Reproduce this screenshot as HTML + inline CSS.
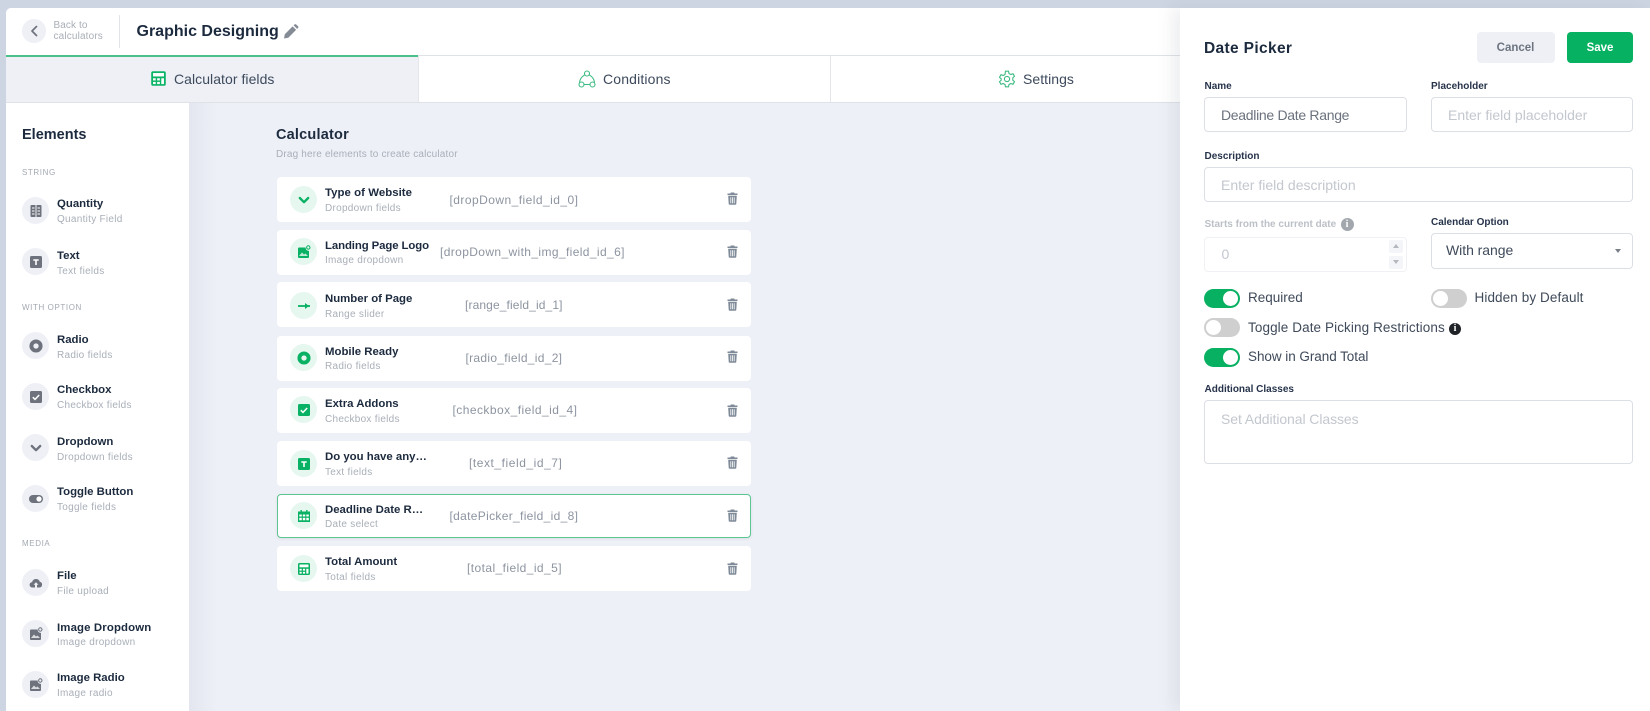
<!DOCTYPE html>
<html lang="en">
<head>
<meta charset="utf-8">
<title>Graphic Designing</title>
<style>
html,body{margin:0;padding:0;width:1650px;height:711px;overflow:hidden;background:#cdd4e2;font-family:"Liberation Sans",sans-serif}
#page{position:absolute;left:0;top:0;width:1650px;height:711px;overflow:hidden;filter:blur(.35px)}
.a,.t{position:absolute}
.t{white-space:nowrap;line-height:20px;height:20px}
.ti{font-size:11.4px;font-weight:bold;color:#1c2a3e;margin-top:1px}
.su{font-size:10px;color:#a9afb8;letter-spacing:.28px;margin-top:1.5px}
.id{font-size:12px;color:#8d94a0;letter-spacing:.45px}
.sec{font-size:8px;color:#a3a9b2;letter-spacing:.6px;left:22px;margin-top:1px}
.lb{font-size:10px;font-weight:bold;color:#26334a;margin-top:1px}
.tb{font-size:14px;color:#3d4a5c}
.tg{font-size:13.5px;color:#3f4a5a}
.c{position:absolute;border-radius:50%;display:flex;align-items:center;justify-content:center}
.cg{width:27px;height:27px;background:#eef0f6;color:#6d727c;left:22px}
.cw{width:27px;height:27px;background:#e6f7ef;color:#08b163;left:290px}
.row{position:absolute;left:277px;width:474px;height:45px;background:#fff;border-radius:4px}
.in{position:absolute;box-sizing:border-box;background:#fff;border:1px solid #dcdfe5;border-radius:4px}
.pl{font-size:14px;color:#c3c7ce}
.sw{position:absolute;width:36px;height:19px;border-radius:10px}
.sw i{position:absolute;top:2px;width:15px;height:15px;border-radius:50%;background:#fff}
.on{background:#08b162}.on i{right:2px}
.off{background:#cfcfcf}.off i{left:2px}
svg{display:block}
</style>
</head>
<body>
<svg width="0" height="0" style="position:absolute">
<defs>
<symbol id="chev" viewBox="0 0 14 14"><path d="M2.800 5l4.200 4.200L11.200 5" fill="none" stroke="currentColor" stroke-width="2.300" stroke-linecap="round" stroke-linejoin="round"/></symbol>
<symbol id="img" viewBox="0 0 14 14"><path d="M1.500 2.500h7.200a3 3 0 0 0 3.300 3.400V12a1 1 0 0 1-1 1h-9a1 1 0 0 1-1-1V3.500a1 1 0 0 1 1-1z" fill="currentColor"/><path d="M2 11l3-3.500 2 2 1.500-1 2.500 2.500z" fill="#fff" opacity=".75"/><circle cx="11.300" cy="2.500" r="1.700" fill="none" stroke="currentColor" stroke-width="1"/></symbol>
<symbol id="arrow" viewBox="0 0 14 14"><path d="M1 7h12" stroke="currentColor" stroke-width="1.800"/><path d="M8 4l4 3-4 3z" fill="currentColor"/></symbol>
<symbol id="radio" viewBox="0 0 14 14"><circle cx="7" cy="7" r="4.600" fill="none" stroke="currentColor" stroke-width="3.900"/></symbol>
<symbol id="check" viewBox="0 0 14 14"><rect x="1" y="1" width="12" height="12" rx="1.500" fill="currentColor"/><path d="M3.800 7.200l2.200 2.200 4.200-4.400" fill="none" stroke="#fff" stroke-width="1.500"/></symbol>
<symbol id="text" viewBox="0 0 14 14"><rect x="1" y="1" width="12" height="12" rx="1.500" fill="currentColor"/><path d="M4.300 4.300h5.400v1.500H7.800v4.200H6.200V5.800H4.300z" fill="#fff"/></symbol>
<symbol id="cal" viewBox="0 0 14 14"><path d="M3.500 1h1.400v1.500h4.200V1h1.400v1.500H13V13H1V2.500h2.500z" fill="currentColor"/><g fill="#fff"><rect x="2.300" y="5.500" width="2.500" height="2"/><rect x="5.800" y="5.500" width="2.500" height="2"/><rect x="9.300" y="5.500" width="2.500" height="2"/><rect x="2.300" y="8.800" width="2.500" height="2.500"/><rect x="5.800" y="8.800" width="2.500" height="2.500"/><rect x="9.300" y="8.800" width="2.500" height="2.500"/></g></symbol>
<symbol id="calc" viewBox="0 0 14 14"><rect x="1" y="1" width="12" height="12" rx="1.500" fill="currentColor"/><g fill="#fff"><rect x="2.500" y="2.500" width="9" height="2.800"/><rect x="2.500" y="6.800" width="2.200" height="1.800"/><rect x="5.900" y="6.800" width="2.200" height="1.800"/><rect x="9.300" y="6.800" width="2.200" height="4.800"/><rect x="2.500" y="9.800" width="2.200" height="1.800"/><rect x="5.900" y="9.800" width="2.200" height="1.800"/></g></symbol>
<symbol id="qty" viewBox="0 0 14 14"><rect x="1.500" y="1" width="11" height="12" rx="1" fill="currentColor"/><g fill="none" stroke="#fff" stroke-width=".9"><path d="M7 1v12M3 4h2.500M3 7h2.500M3 10h2.500M8.500 4H11M8.500 7H11M8.500 10H11"/></g></symbol>
<symbol id="tog" viewBox="0 0 14 14"><rect x="0" y="3" width="14" height="8" rx="4" fill="currentColor"/><circle cx="10" cy="7" r="2.600" fill="#fff"/></symbol>
<symbol id="cloud" viewBox="0 0 14 14"><path d="M3.500 11.500a2.700 2.700 0 0 1-.4-5.400 4 4 0 0 1 7.700-.3 2.900 2.900 0 0 1-.2 5.700H8V8.800h1.500L7 6.200 4.500 8.800H6v2.700z" fill="currentColor"/></symbol>
<symbol id="trash" viewBox="0 0 11 13"><path d="M3.800.5h3.400l.5 1H10.500v1.500H.5V1.500h2.800zM1.200 3.800h8.600l-.5 8a1 1 0 0 1-1 1H2.700a1 1 0 0 1-1-1z" fill="#7f8a98"/><path d="M3.800 5.300v6M5.500 5.300v6M7.200 5.300v6" stroke="#fff" stroke-width=".8"/></symbol>
</defs>
</svg>
<div id="page">
<!-- card -->
<div class="a" style="left:6px;top:8px;width:1400px;height:703px;background:#eef0f7;border-radius:5px 0 0 0;overflow:hidden"></div>
<!-- header -->
<div class="a" style="left:6px;top:8px;width:1180px;height:47px;background:#fff;border-radius:5px 0 0 0"></div>
<div class="a c" style="left:22px;top:19px;width:24px;height:24px;background:#eef0f6"><svg width="8" height="14" viewBox="0 0 8 14"><path d="M6.500 2.500L2 7l4.500 4.500" fill="none" stroke="#6d727c" stroke-width="1.700" stroke-linecap="round" stroke-linejoin="round"/></svg></div>
<div class="t" style="left:53.500px;top:16px;font-size:10px;letter-spacing:.1px;color:#a9aeb7">Back to</div>
<div class="t" style="left:53.500px;top:27px;font-size:10px;letter-spacing:.15px;color:#a9aeb7">calculators</div>
<div class="a" style="left:119px;top:15px;width:1px;height:33px;background:#e2e4e9"></div>
<div class="t" style="left:136.500px;top:22px;font-size:16px;font-weight:bold;color:#1c2a3e">Graphic Designing</div>
<svg class="a" style="left:283px;top:24px" width="16" height="15" viewBox="0 0 16 15"><path d="M1 14.500l.8-4.300 7.800-7.800 3.500 3.500-7.800 7.800zM10.600 1.400l.9-.9a1.200 1.200 0 0 1 1.700 0l1.800 1.800a1.200 1.200 0 0 1 0 1.700l-.9.900z" fill="#858b95"/></svg>
<!-- tabs -->
<div class="a" style="left:6px;top:55px;width:1180px;height:48px;background:#fff"></div>
<div class="a" style="left:6px;top:56px;width:412px;height:46px;background:#eef0f6"></div>
<div class="a" style="left:6px;top:55px;width:1180px;height:1px;background:#dfe2e6"></div>
<div class="a" style="left:6px;top:55px;width:412px;height:1.500px;background:#4cc08a"></div>
<div class="a" style="left:6px;top:102px;width:1180px;height:1px;background:#dfe2e6"></div>
<div class="a" style="left:417.500px;top:56px;width:1px;height:46px;background:#e4e6ea"></div>
<div class="a" style="left:830px;top:56px;width:1px;height:46px;background:#e4e6ea"></div>
<svg class="a" style="left:150px;top:70px;color:#0cb466" width="17" height="17"><use href="#calc"/></svg>
<div class="t tb" style="left:174px;top:69px;letter-spacing:.05px">Calculator fields</div>
<svg class="a" style="left:578px;top:70px" width="18" height="18" viewBox="0 0 18 18" fill="none" stroke="#3dbb82" stroke-width="1.100"><circle cx="9" cy="3.500" r="2.500"/><circle cx="3.500" cy="14.500" r="2.500"/><circle cx="14.500" cy="14.500" r="2.500"/><path d="M6.800 4.800C4 6.500 1.800 9 1.500 12.500M11.200 4.800c2.800 1.700 5 4.200 5.300 7.700M6 14.500h6"/></svg>
<div class="t tb" style="left:603px;top:69px;letter-spacing:.15px">Conditions</div>
<svg class="a" style="left:998px;top:70px" width="18" height="18" viewBox="0 0 18 18" fill="none" stroke="#3dbb82" stroke-width="1.100"><circle cx="9" cy="9" r="2.600"/><path d="M7.500 1.200h3l.5 2.300 1.800 1 2.200-.8 1.500 2.600-1.700 1.600v2.200l1.700 1.600-1.500 2.600-2.200-.8-1.800 1-.5 2.300h-3l-.5-2.300-1.800-1-2.200.8-1.500-2.600 1.700-1.600V8.900L1.500 7.300 3 4.700l2.200.8 1.800-1z"/></svg>
<div class="t tb" style="left:1023px;top:69px;letter-spacing:.05px">Settings</div>
<!-- sidebar -->
<div class="a" style="left:189px;top:103px;width:28px;height:608px;background:linear-gradient(90deg,#e3e6ef,#eef0f7)"></div>
<div class="a" style="left:6px;top:103px;width:183px;height:608px;background:#fff"></div>
<div class="t" style="left:22px;top:124.500px;font-size:14.500px;font-weight:bold;color:#1c2a3e">Elements</div>
<div class="t sec" style="top:162px">STRING</div>
<div class="t sec" style="top:297px">WITH OPTION</div>
<div class="t sec" style="top:533px">MEDIA</div>

<div class="c cg" style="top:197px"><svg width="14" height="14"><use href="#qty"/></svg></div>
<div class="t ti" style="left:57px;top:193px">Quantity</div><div class="t su" style="left:57px;top:208px">Quantity Field</div>
<div class="c cg" style="top:248px"><svg width="14" height="14"><use href="#text"/></svg></div>
<div class="t ti" style="left:57px;top:244.500px">Text</div><div class="t su" style="left:57px;top:260px">Text fields</div>
<div class="c cg" style="top:332px"><svg width="14" height="14"><use href="#radio"/></svg></div>
<div class="t ti" style="left:57px;top:329px">Radio</div><div class="t su" style="left:57px;top:344px">Radio fields</div>
<div class="c cg" style="top:383px"><svg width="14" height="14"><use href="#check"/></svg></div>
<div class="t ti" style="left:57px;top:379px">Checkbox</div><div class="t su" style="left:57px;top:394px">Checkbox fields</div>
<div class="c cg" style="top:434px"><svg width="14" height="14"><use href="#chev"/></svg></div>
<div class="t ti" style="left:57px;top:431px">Dropdown</div><div class="t su" style="left:57px;top:446px">Dropdown fields</div>
<div class="c cg" style="top:485px"><svg width="14" height="14"><use href="#tog"/></svg></div>
<div class="t ti" style="left:57px;top:481px">Toggle Button</div><div class="t su" style="left:57px;top:496px">Toggle fields</div>
<div class="c cg" style="top:569px"><svg width="14" height="14"><use href="#cloud"/></svg></div>
<div class="t ti" style="left:57px;top:565px">File</div><div class="t su" style="left:57px;top:580px">File upload</div>
<div class="c cg" style="top:620px"><svg width="14" height="14"><use href="#img"/></svg></div>
<div class="t ti" style="left:57px;top:616.500px;letter-spacing:.14px">Image Dropdown</div><div class="t su" style="left:57px;top:631px">Image dropdown</div>
<div class="c cg" style="top:671px"><svg width="14" height="14"><use href="#img"/></svg></div>
<div class="t ti" style="left:57px;top:667px">Image Radio</div><div class="t su" style="left:57px;top:682px">Image radio</div>

<!-- calculator -->
<div class="t" style="left:276px;top:124.500px;font-size:14.500px;font-weight:bold;color:#1c2a3e;letter-spacing:.2px">Calculator</div>
<div class="t su" style="left:276px;top:143px;letter-spacing:.17px">Drag here elements to create calculator</div>

<div class="row" style="top:177px"></div>
<div class="c cw" style="top:186px"><svg width="14" height="14"><use href="#chev"/></svg></div>
<div class="t ti" style="left:325px;top:182px;letter-spacing:.05px">Type of Website</div><div class="t su" style="left:325px;top:197px">Dropdown fields</div>
<div class="t id" style="left:449.500px;top:190px">[dropDown_field_id_0]</div>
<svg class="a" style="left:727px;top:192px" width="11" height="13"><use href="#trash"/></svg>

<div class="row" style="top:230px"></div>
<div class="c cw" style="top:238px"><svg width="14" height="14"><use href="#img"/></svg></div>
<div class="t ti" style="left:325px;top:235px;letter-spacing:-.1px">Landing Page Logo</div><div class="t su" style="left:325px;top:249px">Image dropdown</div>
<div class="t id" style="left:440px;top:242px;letter-spacing:.38px">[dropDown_with_img_field_id_6]</div>
<svg class="a" style="left:727px;top:245px" width="11" height="13"><use href="#trash"/></svg>

<div class="row" style="top:282px"></div>
<div class="c cw" style="top:292px"><svg width="14" height="14"><use href="#arrow"/></svg></div>
<div class="t ti" style="left:325px;top:288px">Number of Page</div><div class="t su" style="left:325px;top:303px">Range slider</div>
<div class="t id" style="left:465px;top:295px;letter-spacing:.12px">[range_field_id_1]</div>
<svg class="a" style="left:727px;top:298px" width="11" height="13"><use href="#trash"/></svg>

<div class="row" style="top:335.500px"></div>
<div class="c cw" style="top:344px"><svg width="14" height="14"><use href="#radio"/></svg></div>
<div class="t ti" style="left:325px;top:340.500px">Mobile Ready</div><div class="t su" style="left:325px;top:355px">Radio fields</div>
<div class="t id" style="left:465.500px;top:347.500px;letter-spacing:.3px">[radio_field_id_2]</div>
<svg class="a" style="left:727px;top:350px" width="11" height="13"><use href="#trash"/></svg>

<div class="row" style="top:388px"></div>
<div class="c cw" style="top:396px"><svg width="14" height="14"><use href="#check"/></svg></div>
<div class="t ti" style="left:325px;top:393px">Extra Addons</div><div class="t su" style="left:325px;top:408px">Checkbox fields</div>
<div class="t id" style="left:452.500px;top:400px">[checkbox_field_id_4]</div>
<svg class="a" style="left:727px;top:404px" width="11" height="13"><use href="#trash"/></svg>

<div class="row" style="top:440.500px"></div>
<div class="c cw" style="top:450px"><svg width="14" height="14"><use href="#text"/></svg></div>
<div class="t ti" style="left:325px;top:446px">Do you have any…</div><div class="t su" style="left:325px;top:461px">Text fields</div>
<div class="t id" style="left:469px;top:453px;letter-spacing:.55px">[text_field_id_7]</div>
<svg class="a" style="left:727px;top:456px" width="11" height="13"><use href="#trash"/></svg>

<div class="row" style="top:493.500px;height:42px;box-sizing:content-box;border:1.500px solid #5cc592;left:276.500px;width:472px;box-shadow:0 1px 3px rgba(0,0,0,.08)"></div>
<div class="c cw" style="top:502px"><svg width="14" height="14"><use href="#cal"/></svg></div>
<div class="t ti" style="left:325px;top:498.500px">Deadline Date R…</div><div class="t su" style="left:325px;top:513px">Date select</div>
<div class="t id" style="left:449.500px;top:505.500px;letter-spacing:.32px">[datePicker_field_id_8]</div>
<svg class="a" style="left:727px;top:509px" width="11" height="13"><use href="#trash"/></svg>

<div class="row" style="top:546px"></div>
<div class="c cw" style="top:555px"><svg width="14" height="14"><use href="#calc"/></svg></div>
<div class="t ti" style="left:325px;top:551px">Total Amount</div><div class="t su" style="left:325px;top:566px">Total fields</div>
<div class="t id" style="left:467px;top:558px;letter-spacing:.42px">[total_field_id_5]</div>
<svg class="a" style="left:727px;top:562px" width="11" height="13"><use href="#trash"/></svg>

<!-- panel -->
<div class="a" style="left:1180px;top:8px;width:470px;height:703px;background:#fff;box-shadow:-8px 0 14px rgba(120,130,150,.13)"></div>
<div class="t" style="left:1204px;top:38.500px;font-size:15.500px;font-weight:bold;color:#1c2a3e;letter-spacing:.35px">Date Picker</div>
<div class="a" style="left:1476.500px;top:32px;width:78px;height:31px;background:#eef0f6;border-radius:4px;text-align:center;line-height:33px;font-size:11.500px;font-weight:bold;color:#6d7480">Cancel</div>
<div class="a" style="left:1567px;top:32px;width:66px;height:31px;background:#07b162;border-radius:4px;text-align:center;line-height:33px;font-size:11.500px;font-weight:bold;color:#fff">Save</div>

<div class="t lb" style="left:1204.500px;top:76px">Name</div>
<div class="t lb" style="left:1431px;top:76px">Placeholder</div>
<div class="in" style="left:1204px;top:97px;width:203px;height:35px"></div>
<div class="in" style="left:1431px;top:97px;width:202px;height:35px"></div>
<div class="t" style="left:1221px;top:105px;font-size:14px;letter-spacing:-.3px;color:#6b727d">Deadline Date Range</div>
<div class="t pl" style="left:1448px;top:105px">Enter field placeholder</div>

<div class="t lb" style="left:1204.500px;top:145.500px">Description</div>
<div class="in" style="left:1204px;top:167px;width:429px;height:35px"></div>
<div class="t pl" style="left:1221px;top:175px">Enter field description</div>

<div class="t" style="left:1204.500px;top:214.500px;font-size:10px;font-weight:bold;color:#bcc0c7">Starts from the current date</div>
<div class="c" style="left:1340.500px;top:217.500px;width:13px;height:13px;background:#a2a7ad;color:#fff;font-size:10px;font-weight:bold;font-family:'Liberation Serif',serif">i</div>
<div class="in" style="left:1204px;top:237px;width:203px;height:35px;border-color:#f0f1f4"></div>
<div class="t" style="left:1221.500px;top:244px;font-size:14px;color:#c3c7ce">0</div>
<div class="a" style="left:1389px;top:240px;width:14px;height:13px;background:#f4f5f8;border-radius:2px"></div>
<div class="a" style="left:1389px;top:256px;width:14px;height:13px;background:#f4f5f8;border-radius:2px"></div>
<div class="a" style="left:1392.500px;top:244px;width:0;height:0;border:3.500px solid transparent;border-top:0;border-bottom:4px solid #b4b8be"></div>
<div class="a" style="left:1392.500px;top:260px;width:0;height:0;border:3.500px solid transparent;border-bottom:0;border-top:4px solid #b4b8be"></div>

<div class="t lb" style="left:1431px;top:211.500px">Calendar Option</div>
<div class="in" style="left:1431px;top:233px;width:202px;height:36px"></div>
<div class="t" style="left:1446px;top:240px;font-size:14px;letter-spacing:-.05px;color:#3f4a5a">With range</div>
<div class="a" style="left:1614.500px;top:248.500px;width:0;height:0;border:3.500px solid transparent;border-bottom:0;border-top:4.500px solid #7a808a"></div>

<div class="sw on" style="left:1204px;top:289px"><i></i></div>
<div class="t tg" style="left:1248px;top:288px">Required</div>
<div class="sw off" style="left:1431px;top:289px"><i></i></div>
<div class="t tg" style="left:1474.500px;top:288px;letter-spacing:.1px">Hidden by Default</div>
<div class="sw off" style="left:1204px;top:318px"><i></i></div>
<div class="t tg" style="left:1248px;top:318px;letter-spacing:.1px">Toggle Date Picking Restrictions</div>
<div class="c" style="left:1449px;top:322.500px;width:12px;height:12px;background:#1f2226;color:#fff;font-size:10px;font-weight:bold;font-family:'Liberation Serif',serif">i</div>
<div class="sw on" style="left:1204px;top:348px"><i></i></div>
<div class="t tg" style="left:1248px;top:347px;letter-spacing:-.05px">Show in Grand Total</div>

<div class="t lb" style="left:1204.500px;top:379px">Additional Classes</div>
<div class="in" style="left:1204px;top:400px;width:429px;height:64px"></div>
<div class="t pl" style="left:1221px;top:409px;letter-spacing:-.08px">Set Additional Classes</div>
</div>
</body>
</html>
